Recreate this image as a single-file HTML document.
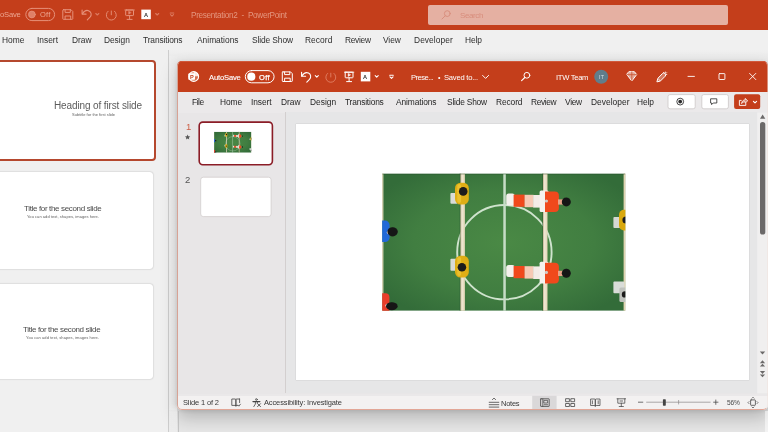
<!DOCTYPE html>
<html lang="en">
<head>
<meta charset="utf-8">
<title>PowerPoint - two windows</title>
<style>
html,body{margin:0;padding:0;}
body{width:768px;height:432px;overflow:hidden;position:relative;background:#e9e9e9;font-family:"Liberation Sans",sans-serif;}
.abs{position:absolute;}
.t{position:absolute;white-space:pre;font-family:"Liberation Sans",sans-serif;will-change:transform;}
svg{position:absolute;overflow:visible;}
/* background window */
#bgtitle{left:0;top:0;width:768px;height:29.7px;background:#c43e1b;}
#bgsearch{left:428px;top:5px;width:300px;height:20px;border-radius:2px;background:#e5b0a2;}
#bgribbon{left:0;top:29.7px;width:768px;height:22.3px;background:#f0f0f0;}
#bgleft{left:0;top:52px;width:168px;height:380px;background:#f0f0f0;}
#bgdivider{left:168.2px;top:49.5px;width:1px;height:383px;background:#cdcdcd;}
#bgmain{left:169.2px;top:49.5px;width:599px;height:383px;background:linear-gradient(#f0f0f0 0,#e9e9e9 10px,#e6e6e6 14px);}
.thumb{position:absolute;background:#fff;border-radius:3px;box-shadow:0 0 1.5px rgba(0,0,0,.35);}
/* front window */
#fg{left:177px;top:60.5px;width:590.6px;height:349px;border-radius:5px;background:#e8e6e7;box-shadow:0 8px 17px 0px rgba(0,0,0,.21), 0 1px 4px rgba(0,0,0,.10);overflow:hidden;}
#fgborder{left:177px;top:60.5px;width:588.6px;height:347px;border-radius:5px;border:1px solid #e2a696;border-left-color:#d7a294;border-top-color:#d1583a;border-right-color:rgba(240,225,220,.5);pointer-events:none;}
</style>
</head>
<body>
<!-- ================= background PowerPoint window ================= -->
<div class="abs" id="bgtitle"></div>
<div class="abs" id="bgsearch"></div>
<div class="abs" id="bgribbon"></div>
<div class="abs" id="bgmain"></div>
<div class="abs" id="bgleft"></div>
<div class="abs" id="bgdivider"></div>
<div class="thumb" style="left:-10px;top:59.6px;width:162.2px;height:97.2px;border:2px solid #b5482e;border-radius:4px;box-shadow:none"></div>
<div class="thumb" style="left:-10px;top:172.2px;width:163px;height:96.6px;"></div>
<div class="thumb" style="left:-10px;top:283.6px;width:163px;height:95.8px;"></div>
<svg width="768" height="432" viewBox="0 0 768 432" style="left:0;top:0">
<g transform="translate(-219.5,-62.2)" fill="none" stroke="#e6917a" stroke-width="1" stroke-linecap="round" stroke-linejoin="round">
<rect x="245.3" y="70.6" width="28.8" height="12.2" rx="6.1" />
<circle cx="251.4" cy="76.7" r="3.4" fill="#e6917a" fill-opacity=".8" stroke="#e6917a" stroke-width=".8"/>
<path d="M282.9 71.9 h7.6 l1.8 1.8 v7.2 a.6 .6 0 0 1 -.6 .6 h-8.8 a.6 .6 0 0 1 -.6 -.6 v-8.4 a.6 .6 0 0 1 .6 -.6 z"/>
<path d="M284.6 72.0 v2.6 h5.2 v-2.6"/>
<path d="M284.6 81.4 v-3.2 h5.6 v3.2"/>
<path d="M301.6 72.3 v4.0 h4.0" stroke-width="1.1"/>
<path d="M301.9 76.0 c1.6 -2.6 4.4 -3.9 6.6 -2.9 c2.5 1.2 2.9 4.3 1.0 6.3 l-2.7 2.7" stroke-width="1.1"/>
<path d="M315.3 75.7 l1.5 1.5 l1.5 -1.5" stroke-width="1.1" stroke="#dc7a60"/>
<path d="M334.0 73.4 a5.0 5.0 0 1 1 -6.4 0" stroke="#e38c74" stroke-width="1"/>
<path d="M330.8 73.2 v3.8" stroke="#e38c74" stroke-width="1"/>
<rect x="345.2" y="72.2" width="7.8" height="5.6" rx=".6"/>
<path d="M344.4 72.2 h9.4" />
<path d="M348.2 73.6 v2.8 l2.2 -1.4 z" fill="#e6917a" stroke-width=".5"/>
<path d="M349.1 77.8 v3.6 M346.6 81.6 h5.0"/>
<rect x="360.8" y="71.8" width="9.5" height="9.6" fill="#fff" stroke="none"/>
<path d="M375.2 75.7 l1.5 1.5 l1.5 -1.5" stroke-width="1.1" stroke="#dc7a60"/>
<path d="M389.7 75.2 h3.6 M390.0 76.9 l1.5 1.4 l1.5 -1.4" stroke-width="1.1" stroke="#dc7a60"/>
</g>
<g fill="none" stroke="#d98f7e" stroke-width="1" stroke-linecap="round"><circle cx="447.3" cy="13.6" r="2.9"/><path d="M445.2 15.8 l-3.2 3.2"/></g>
</svg>
<span class="t" style="left:-11.30px;top:10.32px;font-size:7.6px;line-height:10.64px;letter-spacing:-0.162px;color:#eda691;">AutoSave</span>
<span class="t" style="left:40.40px;top:10.29px;font-size:7.5px;line-height:10.5px;letter-spacing:0.262px;color:#eda691;">Off</span>
<span class="t" style="left:190.80px;top:10.34px;font-size:8.2px;line-height:11.48px;letter-spacing:-0.304px;color:#e4967f;">Presentation2  -  PowerPoint</span>
<span class="t" style="left:460.00px;top:9.56px;font-size:8px;line-height:11.2px;letter-spacing:-0.392px;color:#d88d7c;">Search</span>
<span class="t" style="left:1.50px;top:34.71px;font-size:8.4px;line-height:11.76px;letter-spacing:0.052px;color:#2e2e2e;">Home</span>
<span class="t" style="left:37.00px;top:34.71px;font-size:8.4px;line-height:11.76px;letter-spacing:0.009px;color:#2e2e2e;">Insert</span>
<span class="t" style="left:71.50px;top:34.71px;font-size:8.4px;line-height:11.76px;letter-spacing:-0.016px;color:#2e2e2e;">Draw</span>
<span class="t" style="left:103.50px;top:34.71px;font-size:8.4px;line-height:11.76px;letter-spacing:-0.056px;color:#2e2e2e;">Design</span>
<span class="t" style="left:142.50px;top:34.71px;font-size:8.4px;line-height:11.76px;letter-spacing:-0.116px;color:#2e2e2e;">Transitions</span>
<span class="t" style="left:196.50px;top:34.71px;font-size:8.4px;line-height:11.76px;letter-spacing:0.007px;color:#2e2e2e;">Animations</span>
<span class="t" style="left:252.00px;top:34.71px;font-size:8.4px;line-height:11.76px;letter-spacing:-0.101px;color:#2e2e2e;">Slide Show</span>
<span class="t" style="left:305.20px;top:34.71px;font-size:8.4px;line-height:11.76px;letter-spacing:0.060px;color:#2e2e2e;">Record</span>
<span class="t" style="left:345.00px;top:34.71px;font-size:8.4px;line-height:11.76px;letter-spacing:-0.294px;color:#2e2e2e;">Review</span>
<span class="t" style="left:383.20px;top:34.71px;font-size:8.4px;line-height:11.76px;letter-spacing:-0.072px;color:#2e2e2e;">View</span>
<span class="t" style="left:413.70px;top:34.71px;font-size:8.4px;line-height:11.76px;letter-spacing:0.077px;color:#2e2e2e;">Developer</span>
<span class="t" style="left:465.20px;top:34.71px;font-size:8.4px;line-height:11.76px;letter-spacing:-0.145px;color:#2e2e2e;">Help</span>
<span class="t" style="left:54.00px;top:98.98px;font-size:10px;line-height:14.0px;letter-spacing:-0.124px;color:#5c5c5c;">Heading of first slide</span>
<span class="t" style="left:72.00px;top:112.03px;font-size:4px;line-height:5.6px;letter-spacing:0.012px;color:#5e5e5e;">Subtitle for the first slide</span>
<span class="t" style="left:24.30px;top:202.76px;font-size:8px;line-height:11.2px;letter-spacing:-0.349px;color:#4a4a4a;">Title for the second slide</span>
<span class="t" style="left:27.20px;top:214.43px;font-size:4px;line-height:5.6px;letter-spacing:0.051px;color:#5e5e5e;">You can add text, shapes, images here.</span>
<span class="t" style="left:22.60px;top:323.86px;font-size:8px;line-height:11.2px;letter-spacing:-0.353px;color:#4a4a4a;">Title for the second slide</span>
<span class="t" style="left:25.60px;top:335.33px;font-size:4px;line-height:5.6px;letter-spacing:0.078px;color:#5e5e5e;">You can add text, shapes, images here.</span>
<span class="t" style="left:143.70px;top:11.70px;font-size:5.6px;line-height:7.84px;letter-spacing:0.553px;color:#333;font-weight:bold;">A</span>

<!-- ================= front PowerPoint window ================= -->
<div class="abs" id="fg">
  <div class="abs" style="left:0;top:0;width:591px;height:31.1px;background:#c43e1b;"></div>
  <div class="abs" style="left:0;top:31.1px;width:591px;height:21px;background:#ebe9ea;"></div>
  <!-- slide thumbnails pane / editor -->
  <div class="abs" style="left:108.1px;top:51.8px;width:1px;height:281.2px;background:#d3cfcf;"></div>
  <div class="abs" style="left:109.1px;top:51.8px;width:482px;height:281.2px;background:#e6e6e7;"></div>
  <div class="abs" style="left:118.7px;top:63.3px;width:453.2px;height:255.8px;background:#fff;box-shadow:0 0 1px rgba(0,0,0,.25);"></div>
  <!-- status bar -->
  <div class="abs" style="left:0;top:333px;width:591px;height:2.4px;background:#eae8e9;"></div>
  <div class="abs" style="left:0;top:335.2px;width:591px;height:14px;background:#f3f1f1;"></div>
</div>
<svg width="768" height="432" viewBox="0 0 768 432" style="left:0;top:0">
<circle cx="193.7" cy="76.5" r="4.9" fill="#dc8466"/>
<path d="M193.9 71.6 a4.9 4.9 0 0 1 4.7 4.9 h-4.7 z" fill="#fbe6de"/>
<path d="M193.9 81.4 a4.9 4.9 0 0 0 4.7 -4.9 h-4.7 z" fill="#d46c4c"/>
<circle cx="193.7" cy="76.5" r="4.9" fill="none" stroke="#fff" stroke-width="1.1"/>
<rect x="188.4" y="73.3" width="6.6" height="6.5" rx=".9" fill="#fff"/>
<text x="190.0" y="78.6" font-family="Liberation Sans, sans-serif" font-weight="bold" font-size="5.6" fill="#c43e1b">P</text>
<g transform="translate(0,0)" fill="none" stroke="#fff" stroke-width="1" stroke-linecap="round" stroke-linejoin="round">
<rect x="245.3" y="70.6" width="28.8" height="12.2" rx="6.1" />
<circle cx="251.3" cy="76.7" r="4.1" fill="#fff" stroke="none"/>
<path d="M282.9 71.9 h7.6 l1.8 1.8 v7.2 a.6 .6 0 0 1 -.6 .6 h-8.8 a.6 .6 0 0 1 -.6 -.6 v-8.4 a.6 .6 0 0 1 .6 -.6 z"/>
<path d="M284.6 72.0 v2.6 h5.2 v-2.6"/>
<path d="M284.6 81.4 v-3.2 h5.6 v3.2"/>
<path d="M301.6 72.3 v4.0 h4.0" stroke-width="1.1"/>
<path d="M301.9 76.0 c1.6 -2.6 4.4 -3.9 6.6 -2.9 c2.5 1.2 2.9 4.3 1.0 6.3 l-2.7 2.7" stroke-width="1.1"/>
<path d="M315.3 75.7 l1.5 1.5 l1.5 -1.5" stroke-width="1.1" stroke="#fff"/>
<path d="M334.0 73.4 a5.0 5.0 0 1 1 -6.4 0" stroke="#df7b5f" stroke-width="1"/>
<path d="M330.8 73.2 v3.8" stroke="#df7b5f" stroke-width="1"/>
<rect x="345.2" y="72.2" width="7.8" height="5.6" rx=".6"/>
<path d="M344.4 72.2 h9.4" />
<path d="M348.2 73.6 v2.8 l2.2 -1.4 z" fill="#fff" stroke-width=".5"/>
<path d="M349.1 77.8 v3.6 M346.6 81.6 h5.0"/>
<rect x="360.8" y="71.8" width="9.5" height="9.6" fill="#fff" stroke="none"/>
<path d="M375.2 75.7 l1.5 1.5 l1.5 -1.5" stroke-width="1.1" stroke="#fff"/>
<path d="M389.7 75.2 h3.6 M390.0 76.9 l1.5 1.4 l1.5 -1.4" stroke-width="1.1" stroke="#fff"/>
</g>
<g fill="none" stroke="#fff" stroke-width="1" stroke-linecap="round" stroke-linejoin="round">
<circle cx="526.9" cy="75.3" r="2.9"/><path d="M524.8 77.5 l-3.2 3.2" stroke-width="1.1"/>
<path d="M482.6 75.4 l3.0 3.0 l3.0 -3.0" stroke-width=".95"/>
<path d="M629.2 71.7 h5.2 l2.3 2.9 l-4.9 6.4 l-4.9 -6.4 z" fill="#fff" fill-opacity=".55"/>
<path d="M627.0 74.7 h9.6 M631.8 71.9 v8.6" stroke-width=".8" stroke="#c9532f"/>
<path d="M657.0 81.5 l.9 -3.2 l4.5 -4.7 a1.9 1.9 0 0 1 2.8 2.6 l-4.6 4.6 z" fill="#fff" fill-opacity=".3"/>
<path d="M658.6 79.2 l1.5 1.4" stroke-width=".8"/>
<path d="M665.4 72.0 v.8 M666.8 74.4 h-.7 M663.5 72.3 l.4 .5 M666.7 72.6 l-.5 .5" stroke-width=".8"/>
<path d="M688 76.4 h6.4" stroke-width=".9"/>
<rect x="719" y="73.6" width="5.9" height="5.9" rx=".5" stroke-width=".9"/>
<path d="M749.6 73.4 l6.2 6.2 M755.8 73.4 l-6.2 6.2" stroke-width=".9"/>
</g>
<circle cx="601.2" cy="76.8" r="7" fill="#617d8b"/>
<rect x="668.0" y="94.6" width="27.2" height="14.2" rx="2" fill="#fff" stroke="#cbc7c7" stroke-width=".8"/>
<circle cx="680.2" cy="101.6" r="3.4" fill="none" stroke="#333" stroke-width=".9"/><circle cx="680.2" cy="101.6" r="1.9" fill="#2a2a2a"/>
<rect x="701.8" y="94.6" width="26.6" height="14.2" rx="2" fill="#fff" stroke="#cbc7c7" stroke-width=".8"/>
<path d="M710.6 98.8 h6.2 v4.2 h-3.6 l-1.6 1.6 v-1.6 h-1.0 z" fill="none" stroke="#333" stroke-width=".85" stroke-linejoin="round"/>
<rect x="734.1" y="94.3" width="26.1" height="14.7" rx="2" fill="#c43e1b"/>
<path d="M741.6 100.4 h-2.2 v5.0 h6.4 v-2.2" fill="none" stroke="#fff" stroke-width=".9" stroke-linejoin="round"/>
<path d="M741.6 103.6 c.2 -2.4 1.6 -3.6 3.6 -3.7 v-1.5 l2.5 2.4 l-2.5 2.4 v-1.5 c-1.5 0 -2.7 .6 -3.6 1.9z" fill="#fff" fill-opacity=".35" stroke="#fff" stroke-width=".8" stroke-linejoin="round"/>
<path d="M753.4 101.3 l1.6 1.6 l1.6 -1.6" fill="none" stroke="#fff" stroke-width="1.1" stroke-linecap="round" stroke-linejoin="round"/>
<defs><clipPath id="fclip"><rect x="382.2" y="173.5" width="243.2" height="137.3"/></clipPath>
<radialGradient id="fgrass" cx="50%" cy="50%" r="62%"><stop offset="0" stop-color="#4a8945"/><stop offset=".6" stop-color="#417e41"/><stop offset="1" stop-color="#336c39"/></radialGradient>
<filter id="fblur" x="-5%" y="-5%" width="110%" height="110%"><feGaussianBlur stdDeviation="0.45"/></filter>
<linearGradient id="frod" x1="0" x2="1" y1="0" y2="0"><stop offset="0" stop-color="#c3b392"/><stop offset=".35" stop-color="#f1e8d4"/><stop offset="1" stop-color="#e0d3b4"/></linearGradient>
</defs>
<g transform=""><g clip-path="url(#fclip)">
<rect x="382.2" y="173.5" width="243.2" height="137.3" fill="url(#fgrass)"/>
<g filter="url(#fblur)">
<circle cx="504.4" cy="252.2" r="47.2" fill="none" stroke="#cfe3cd" stroke-width="1.9"/>
<rect x="503.3" y="170" width="2.5" height="145" fill="#c6dcc6"/>
<rect x="459.6" y="170" width="2" height="145" fill="#2a5a2e" opacity=".6"/>
<rect x="542.2" y="170" width="2" height="145" fill="#2a5a2e" opacity=".6"/>
<rect x="460.4" y="170" width="4.5" height="145" fill="url(#frod)"/>
<rect x="543.0" y="170" width="4.5" height="145" fill="url(#frod)"/>
<rect x="381.5" y="170" width="1.9" height="145" fill="#e4d9bb"/>
<rect x="623.6" y="170" width="2.5" height="145" fill="#e0d4b2"/>
<rect x="450.4" y="193.0" width="7" height="10.8" rx="1" fill="#d9dbd6"/>
<rect x="455.0" y="182.7" width="13.8" height="21.8" rx="5.5" fill="#dfae12"/>
<rect x="457.2" y="183.9" width="4" height="19" rx="2" fill="#f0c93a" opacity=".7"/>
<rect x="450.4" y="258.7" width="7" height="12.0" rx="1" fill="#d9dbd6"/>
<rect x="455.0" y="255.7" width="13.8" height="21.8" rx="5.5" fill="#dfae12"/>
<rect x="457.2" y="256.9" width="4" height="19" rx="2" fill="#f0c93a" opacity=".7"/>
<circle cx="463.2" cy="191.4" r="4.3" fill="#1d1b1c"/>
<circle cx="461.9" cy="267.3" r="4.3" fill="#1d1b1c"/>
<g transform="translate(0,0)">
<rect x="506.2" y="193.6" width="8.6" height="12" rx="2.5" fill="#f4f0ec"/>
<rect x="513.6" y="194.6" width="11.2" height="12.2" fill="#f0481f"/>
<rect x="524.6" y="194.8" width="9" height="12.4" fill="#f6c9b4"/>
<rect x="533.2" y="195" width="7" height="12.6" fill="#f3ebe6"/>
<rect x="539.6" y="190.4" width="9" height="21.6" rx="1.5" fill="#f5f1ee"/>
<path d="M545 191.4 h9.5 q4.4 0 4.4 4 v12.6 q0 4 -4.4 4 h-9.5 z" fill="#f0481f"/>
<circle cx="546.4" cy="201" r="1.6" fill="#cfc9c6"/>
<rect x="558" y="199.4" width="5" height="5.2" fill="#e9a387"/>
<circle cx="566.3" cy="201.9" r="4.5" fill="#171516"/>
</g>
<g transform="translate(0,71.4)">
<rect x="506.2" y="193.6" width="8.6" height="12" rx="2.5" fill="#f4f0ec"/>
<rect x="513.6" y="194.6" width="11.2" height="12.2" fill="#f0481f"/>
<rect x="524.6" y="194.8" width="9" height="12.4" fill="#f6c9b4"/>
<rect x="533.2" y="195" width="7" height="12.6" fill="#f3ebe6"/>
<rect x="539.6" y="190.4" width="9" height="21.6" rx="1.5" fill="#f5f1ee"/>
<path d="M545 191.4 h9.5 q4.4 0 4.4 4 v12.6 q0 4 -4.4 4 h-9.5 z" fill="#f0481f"/>
<circle cx="546.4" cy="201" r="1.6" fill="#cfc9c6"/>
<rect x="558" y="199.4" width="5" height="5.2" fill="#e9a387"/>
<circle cx="566.3" cy="201.9" r="4.5" fill="#171516"/>
</g>
<rect x="378" y="220.6" width="11.6" height="21.5" rx="4.5" fill="#2469d8"/>
<circle cx="388.6" cy="232.4" r="1.8" fill="#e8e2de"/>
<ellipse cx="392.6" cy="231.8" rx="5.2" ry="4.6" fill="#171516"/>
<rect x="378" y="293.2" width="11.4" height="22" rx="4" fill="#ea3d2c"/>
<circle cx="387.2" cy="305.6" r="1.8" fill="#efe4e0"/>
<ellipse cx="391.8" cy="306.2" rx="5.8" ry="4" fill="#171516"/>
<rect x="613.4" y="217" width="7" height="11" rx="1" fill="#d5d8d3"/>
<rect x="619" y="209.8" width="12" height="20.6" rx="5" fill="#d9a810"/>
<circle cx="626" cy="220" r="3.6" fill="#1d1b1c"/>
<rect x="613.4" y="281.6" width="11" height="11.6" rx="1" fill="#d9dcd8"/>
<rect x="619.4" y="287.5" width="8" height="14.5" rx="1.5" fill="#bfc2bd"/>
<circle cx="625" cy="294.4" r="3.2" fill="#1d1b1c"/>
</g>
<rect x="382.2" y="173.5" width="243.2" height="1" fill="#1f4525" opacity=".45"/>
</g></g>
<rect x="199.2" y="122.1" width="73.2" height="42.6" rx="3.6" fill="#fff" stroke="#8b1d27" stroke-width="1.6"/>
<defs><clipPath id="mclip"><rect x="382.2" y="173.5" width="243.2" height="137.3"/></clipPath>
<radialGradient id="mgrass" cx="50%" cy="50%" r="62%"><stop offset="0" stop-color="#4a8945"/><stop offset=".6" stop-color="#417e41"/><stop offset="1" stop-color="#336c39"/></radialGradient>
<filter id="mblur" x="-5%" y="-5%" width="110%" height="110%"><feGaussianBlur stdDeviation="1.6"/></filter>
<linearGradient id="mrod" x1="0" x2="1" y1="0" y2="0"><stop offset="0" stop-color="#c3b392"/><stop offset=".35" stop-color="#f1e8d4"/><stop offset="1" stop-color="#e0d3b4"/></linearGradient>
</defs>
<g transform="translate(155.22,105.39) scale(0.1538,0.1522)"><g clip-path="url(#mclip)">
<rect x="382.2" y="173.5" width="243.2" height="137.3" fill="url(#mgrass)"/>
<g filter="url(#mblur)">
<circle cx="504.4" cy="252.2" r="47.2" fill="none" stroke="#cfe3cd" stroke-width="1.9"/>
<rect x="503.3" y="170" width="2.5" height="145" fill="#c6dcc6"/>
<rect x="459.6" y="170" width="2" height="145" fill="#2a5a2e" opacity=".6"/>
<rect x="542.2" y="170" width="2" height="145" fill="#2a5a2e" opacity=".6"/>
<rect x="460.4" y="170" width="4.5" height="145" fill="url(#mrod)"/>
<rect x="543.0" y="170" width="4.5" height="145" fill="url(#mrod)"/>
<rect x="381.5" y="170" width="1.9" height="145" fill="#e4d9bb"/>
<rect x="623.6" y="170" width="2.5" height="145" fill="#e0d4b2"/>
<rect x="450.4" y="193.0" width="7" height="10.8" rx="1" fill="#d9dbd6"/>
<rect x="455.0" y="182.7" width="13.8" height="21.8" rx="5.5" fill="#dfae12"/>
<rect x="457.2" y="183.9" width="4" height="19" rx="2" fill="#f0c93a" opacity=".7"/>
<rect x="450.4" y="258.7" width="7" height="12.0" rx="1" fill="#d9dbd6"/>
<rect x="455.0" y="255.7" width="13.8" height="21.8" rx="5.5" fill="#dfae12"/>
<rect x="457.2" y="256.9" width="4" height="19" rx="2" fill="#f0c93a" opacity=".7"/>
<circle cx="463.2" cy="191.4" r="4.3" fill="#1d1b1c"/>
<circle cx="461.9" cy="267.3" r="4.3" fill="#1d1b1c"/>
<g transform="translate(0,0)">
<rect x="506.2" y="193.6" width="8.6" height="12" rx="2.5" fill="#f4f0ec"/>
<rect x="513.6" y="194.6" width="11.2" height="12.2" fill="#f0481f"/>
<rect x="524.6" y="194.8" width="9" height="12.4" fill="#f6c9b4"/>
<rect x="533.2" y="195" width="7" height="12.6" fill="#f3ebe6"/>
<rect x="539.6" y="190.4" width="9" height="21.6" rx="1.5" fill="#f5f1ee"/>
<path d="M545 191.4 h9.5 q4.4 0 4.4 4 v12.6 q0 4 -4.4 4 h-9.5 z" fill="#f0481f"/>
<circle cx="546.4" cy="201" r="1.6" fill="#cfc9c6"/>
<rect x="558" y="199.4" width="5" height="5.2" fill="#e9a387"/>
<circle cx="566.3" cy="201.9" r="4.5" fill="#171516"/>
</g>
<g transform="translate(0,71.4)">
<rect x="506.2" y="193.6" width="8.6" height="12" rx="2.5" fill="#f4f0ec"/>
<rect x="513.6" y="194.6" width="11.2" height="12.2" fill="#f0481f"/>
<rect x="524.6" y="194.8" width="9" height="12.4" fill="#f6c9b4"/>
<rect x="533.2" y="195" width="7" height="12.6" fill="#f3ebe6"/>
<rect x="539.6" y="190.4" width="9" height="21.6" rx="1.5" fill="#f5f1ee"/>
<path d="M545 191.4 h9.5 q4.4 0 4.4 4 v12.6 q0 4 -4.4 4 h-9.5 z" fill="#f0481f"/>
<circle cx="546.4" cy="201" r="1.6" fill="#cfc9c6"/>
<rect x="558" y="199.4" width="5" height="5.2" fill="#e9a387"/>
<circle cx="566.3" cy="201.9" r="4.5" fill="#171516"/>
</g>
<rect x="378" y="220.6" width="11.6" height="21.5" rx="4.5" fill="#2469d8"/>
<circle cx="388.6" cy="232.4" r="1.8" fill="#e8e2de"/>
<ellipse cx="392.6" cy="231.8" rx="5.2" ry="4.6" fill="#171516"/>
<rect x="378" y="293.2" width="11.4" height="22" rx="4" fill="#ea3d2c"/>
<circle cx="387.2" cy="305.6" r="1.8" fill="#efe4e0"/>
<ellipse cx="391.8" cy="306.2" rx="5.8" ry="4" fill="#171516"/>
<rect x="613.4" y="217" width="7" height="11" rx="1" fill="#d5d8d3"/>
<rect x="619" y="209.8" width="12" height="20.6" rx="5" fill="#d9a810"/>
<circle cx="626" cy="220" r="3.6" fill="#1d1b1c"/>
<rect x="613.4" y="281.6" width="11" height="11.6" rx="1" fill="#d9dcd8"/>
<rect x="619.4" y="287.5" width="8" height="14.5" rx="1.5" fill="#bfc2bd"/>
<circle cx="625" cy="294.4" r="3.2" fill="#1d1b1c"/>
</g>
<rect x="382.2" y="173.5" width="243.2" height="1" fill="#1f4525" opacity=".45"/>
</g></g>
<rect x="200.7" y="177.2" width="70.4" height="39.4" rx="2.6" fill="#fff" stroke="#d2cdcd" stroke-width=".8"/>
<path d="M187.6 134.6 l.75 1.75 l1.9 .15 l-1.45 1.25 l.45 1.85 l-1.65 -1 l-1.65 1 l.45 -1.85 l-1.45 -1.25 l1.9 -.15 z" fill="#555"/>
<rect x="532.2" y="395.8" width="24.4" height="13.4" fill="#dad8d9"/>
<g fill="none" stroke="#444" stroke-width=".8" stroke-linejoin="round" stroke-linecap="round">
<path d="M232.2 399.0 h2.9 q.8 0 .8 .8 v6.4 q0 -.8 -.8 -.8 h-2.9 z M239.6 399.0 h-2.9 q-.8 0 -.8 .8 v6.4 q0 -.8 .8 -.8 h1.0 M239.6 399.0 v3.6"/>
<path d="M238.0 405.2 l.9 1.0 l1.5 -2.0" stroke-width=".8"/>
<circle cx="256.4" cy="399.5" r=".9" stroke-width=".7"/>
<path d="M253.0 401.6 h6.8" stroke-width="1.4"/>
<path d="M255.4 402.2 v1.8 l-1.6 2.6 M257.4 402.2 v1.0" stroke-width=".8"/>
<path d="M257.6 403.7 l2.9 2.9 M260.5 403.7 l-2.9 2.9" stroke-width=".9"/>
<path d="M492.4 399.6 l1.6 -1.5 l1.6 1.5 M489.2 402.3 h9.6 M489.2 404.7 h9.6 M489.2 407.1 h9.6" stroke-width=".8"/>
<rect x="540.6" y="398.8" width="8.6" height="7.6" rx=".4"/><path d="M542.8 398.8 v7.6 M544.2 400.4 h3.4 v2.6 h-3.4 z M544.2 404.7 h3.4" stroke-width=".7"/>
<rect x="566.0" y="398.7" width="3.4" height="3"/><rect x="571.2" y="398.7" width="3.4" height="3"/><rect x="566.0" y="403.5" width="3.4" height="3"/><rect x="571.2" y="403.5" width="3.4" height="3"/>
<path d="M591.0 399.0 h3.4 q.9 0 .9 .9 v6.4 q0 -.8 -.9 -.8 h-3.4 z M599.6 399.0 h-3.4 q-.9 0 -.9 .9 v6.4 q0 -.8 .9 -.8 h3.4 z M592.4 400.8 v3 M598.2 400.8 v3" stroke-width=".75"/>
<path d="M617.0 398.8 h8.6 M617.8 398.8 v4.4 h7.0 v-4.4 M621.3 403.2 v3.2 M619.2 406.5 h4.2 M620.0 401 h2.6" stroke-width=".75"/>
<path d="M638.4 402.2 h4.4 M713.6 402.2 h4.4 M715.8 400 v4.4" stroke-width=".75"/>
<path d="M646.6 402.2 h63.6 M678.6 400.4 v3.6" stroke="#8a8787" stroke-width=".7"/>
<rect x="662.9" y="399.3" width="2.9" height="6.4" rx=".6" fill="#444" stroke="none"/>
<rect x="750.6" y="399.9" width="4.8" height="5.4" rx=".5"/><path d="M752.0 398.2 l1.0 -1.0 l1.0 1.0 M752.0 407.0 l1.0 1.0 l1.0 -1.0 M749.0 401.6 l-1.0 1.0 l1.0 1.0 M757.0 401.6 l1.0 1.0 l-1.0 1.0" stroke-width=".7"/>
</g>
<rect x="757.2" y="112.4" width="10.8" height="281" fill="#f0efef"/>
<rect x="760" y="122" width="5.3" height="112.6" rx="2.6" fill="#6b6969"/>
<g fill="#6b6969"><path d="M760 118.7 l2.65 -4.3 l2.65 4.3 z"/><path d="M759.8 351.4 l2.7 3.2 l2.7 -3.2 z"/>
<path d="M759.9 363.2 l2.6 -2.9 l2.6 2.9 z M759.9 366.6 l2.6 -2.9 l2.6 2.9 z"/><path d="M759.9 371.0 l2.6 2.9 l2.6 -2.9 z M759.9 374.4 l2.6 2.9 l2.6 -2.9 z"/></g>
</svg>
<span class="t" style="left:208.60px;top:72.92px;font-size:7.6px;line-height:10.64px;letter-spacing:-0.162px;color:#ffffff;-webkit-text-stroke:.12px #fff;">AutoSave</span>
<span class="t" style="left:259.40px;top:72.78px;font-size:7.5px;line-height:10.5px;letter-spacing:0.363px;color:#ffffff;-webkit-text-stroke:.25px #fff;">Off</span>
<span class="t" style="left:410.70px;top:72.92px;font-size:7.6px;line-height:10.64px;letter-spacing:-0.510px;color:#ffffff;">Prese...</span>
<span class="t" style="left:437.80px;top:72.51px;font-size:7px;line-height:9.8px;letter-spacing:0.747px;color:#ffffff;">•</span>
<span class="t" style="left:444.30px;top:72.92px;font-size:7.6px;line-height:10.64px;letter-spacing:-0.231px;color:#ffffff;">Saved to...</span>
<span class="t" style="left:555.80px;top:72.92px;font-size:7.6px;line-height:10.64px;letter-spacing:-0.296px;color:#ffffff;">ITW Team</span>
<span class="t" style="left:598.60px;top:74.27px;font-size:5.5px;line-height:7.7px;letter-spacing:0.109px;color:#d3dde3;">IT</span>
<span class="t" style="left:191.50px;top:96.91px;font-size:8.4px;line-height:11.76px;letter-spacing:-0.433px;color:#262626;">File</span>
<span class="t" style="left:219.50px;top:96.91px;font-size:8.4px;line-height:11.76px;letter-spacing:-0.048px;color:#262626;">Home</span>
<span class="t" style="left:251.20px;top:96.91px;font-size:8.4px;line-height:11.76px;letter-spacing:-0.091px;color:#262626;">Insert</span>
<span class="t" style="left:281.20px;top:96.91px;font-size:8.4px;line-height:11.76px;letter-spacing:-0.016px;color:#262626;">Draw</span>
<span class="t" style="left:309.50px;top:96.91px;font-size:8.4px;line-height:11.76px;letter-spacing:0.024px;color:#262626;">Design</span>
<span class="t" style="left:345.20px;top:96.91px;font-size:8.4px;line-height:11.76px;letter-spacing:-0.186px;color:#262626;">Transitions</span>
<span class="t" style="left:395.50px;top:96.91px;font-size:8.4px;line-height:11.76px;letter-spacing:-0.104px;color:#262626;">Animations</span>
<span class="t" style="left:447.20px;top:96.91px;font-size:8.4px;line-height:11.76px;letter-spacing:-0.201px;color:#262626;">Slide Show</span>
<span class="t" style="left:496.20px;top:96.91px;font-size:8.4px;line-height:11.76px;letter-spacing:-0.100px;color:#262626;">Record</span>
<span class="t" style="left:531.20px;top:96.91px;font-size:8.4px;line-height:11.76px;letter-spacing:-0.394px;color:#262626;">Review</span>
<span class="t" style="left:565.20px;top:96.91px;font-size:8.4px;line-height:11.76px;letter-spacing:-0.305px;color:#262626;">View</span>
<span class="t" style="left:590.50px;top:96.91px;font-size:8.4px;line-height:11.76px;letter-spacing:0.039px;color:#262626;">Developer</span>
<span class="t" style="left:637.00px;top:96.91px;font-size:8.4px;line-height:11.76px;letter-spacing:-0.078px;color:#262626;">Help</span>
<span class="t" style="left:185.80px;top:119.70px;font-size:9.5px;line-height:13.3px;letter-spacing:-1.097px;color:#cc5f47;">1</span>
<span class="t" style="left:185.30px;top:173.00px;font-size:9.5px;line-height:13.3px;letter-spacing:-0.297px;color:#555;">2</span>
<span class="t" style="left:183.00px;top:398.38px;font-size:7.5px;line-height:10.5px;letter-spacing:-0.139px;color:#383838;">Slide 1 of 2</span>
<span class="t" style="left:264.00px;top:398.38px;font-size:7.5px;line-height:10.5px;letter-spacing:-0.132px;color:#383838;">Accessibility: Investigate</span>
<span class="t" style="left:500.60px;top:398.79px;font-size:7.5px;line-height:10.5px;letter-spacing:-0.248px;color:#383838;">Notes</span>
<span class="t" style="left:727.40px;top:398.06px;font-size:6.6px;line-height:9.24px;letter-spacing:-0.202px;color:#4a4a4a;">56%</span>
<span class="t" style="left:363.20px;top:74.00px;font-size:5.6px;line-height:7.84px;letter-spacing:0.553px;color:#333;font-weight:bold;">A</span>
<div class="abs" id="fgborder"></div>
<div class="abs" style="left:169.2px;top:56px;width:7.8px;height:354px;background:linear-gradient(90deg,rgba(240,240,240,.6),rgba(240,240,240,.15));"></div>
<div class="abs" style="left:169.2px;top:404px;width:8px;height:28px;background:linear-gradient(rgba(238,238,238,0),rgba(238,238,238,.75) 8px);"></div>
<div class="abs" style="left:177.8px;top:411px;width:1px;height:21px;background:rgba(170,170,170,.55);"></div>
<div class="abs" style="left:764.6px;top:410.5px;width:3.4px;height:21.5px;background:rgba(255,255,255,.5);"></div>
</body>
</html>
